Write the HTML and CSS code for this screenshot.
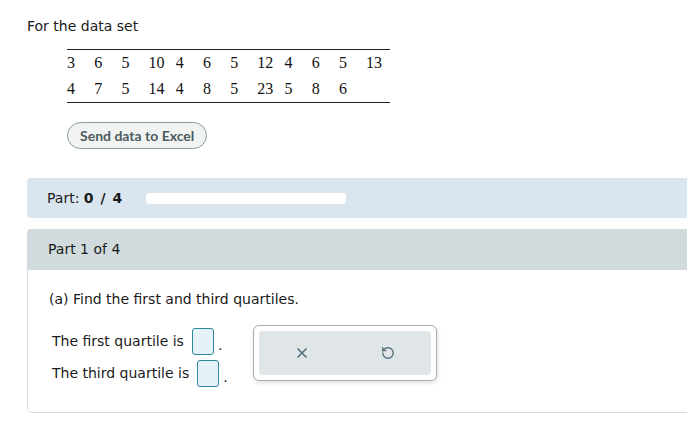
FILE: index.html
```html
<!DOCTYPE html>
<html lang="en">
<head>
    <meta charset="UTF-8">
    <meta name="viewport" content="width=device-width, initial-scale=1.0">
    <title>Quartiles</title>
    <link rel="stylesheet" href="styles.css">
</head>
<body>
    <div class="page">
        <p class="intro">For the data set</p>

        <div class="data-table">
            <span>3</span><span>6</span><span>5</span><span>10</span><span>4</span><span>6</span>
            <span>5</span><span>12</span><span>4</span><span>6</span><span>5</span><span>13</span>
            <span>4</span><span>7</span><span>5</span><span>14</span><span>4</span><span>8</span>
            <span>5</span><span>23</span><span>5</span><span>8</span><span>6</span><span></span>
        </div>

        <button class="excel-btn">Send data to Excel</button>

        <div class="part-bar">
            <span class="part-label">Part: <b>0 / 4</b></span>
            <div class="progress"></div>
        </div>

        <div class="part-card">
            <div class="part-head">Part 1 of 4</div>
            <div class="part-body">
                <p class="question">(a) Find the first and third quartiles.</p>
                <div class="answer-area">
                    <div class="answers">
                        <div class="answer-row">The first quartile is <span class="box"></span><span class="dot">.</span></div>
                        <div class="answer-row">The third quartile is <span class="box"></span><span class="dot">.</span></div>
                    </div>
                    <div class="tools">
                        <div class="tools-inner">
                            <svg class="icon" width="12" height="12" viewBox="0 0 12 12">
                                <path d="M1.5 1.5 L10.5 10.5 M10.5 1.5 L1.5 10.5" stroke="#55717c" stroke-width="1.6" fill="none"/>
                            </svg>
                            <svg class="icon" width="14" height="14" viewBox="0 0 24 24">
                                <path d="M3 12a9 9 0 1 0 9-9 9.75 9.75 0 0 0-6.74 2.74L3 8" stroke="#55717c" stroke-width="2.4" fill="none" stroke-linecap="round" stroke-linejoin="round"/>
                                <path d="M3 3v5h5" stroke="#55717c" stroke-width="2.4" fill="none" stroke-linecap="round" stroke-linejoin="round"/>
                            </svg>
                        </div>
                    </div>
                </div>
            </div>
        </div>
    </div>
</body>
</html>
```

FILE: styles.css
```css
body, html {
    margin: 0;
    padding: 0;
    background: #fff;
    overflow: hidden;
    font-family: "DejaVu Sans", Verdana, sans-serif;
    font-size: 14px;
    color: #1a1a1a;
}

.page {
    padding: 18px 0 0 27px;
    margin-right: -20px;
}

.intro {
    margin: 0;
    line-height: 17px;
}

.data-table {
    display: grid;
    grid-template-columns: repeat(11, 27.2px) 24px;
    width: 323px;
    margin: 14px 0 0 40px;
    border-top: 1px solid #222;
    border-bottom: 1px solid #222;
    font-family: "Liberation Serif", "Times New Roman", serif;
    font-size: 16px;
    line-height: 26px;
    color: #111;
}

.excel-btn {
    display: block;
    margin: 19px 0 0 40px;
    height: 27px;
    padding: 0 12px;
    border: 1px solid #8d9a9c;
    border-radius: 14px;
    background: #f1f3f3;
    font-family: Lato, "Open Sans", sans-serif;
    font-weight: bold;
    font-size: 14px;
    color: #4d5b5e;
}

.part-bar {
    display: flex;
    align-items: center;
    gap: 24px;
    height: 40px;
    margin-top: 29px;
    padding-left: 20px;
    background: #dae6ef;
    border-radius: 4px 0 0 4px;
}

.part-label b {
    word-spacing: 2px;
}

.progress {
    width: 200px;
    height: 11px;
    background: #fff;
    border-radius: 3px;
}

.part-card {
    margin-top: 11px;
}

.part-head {
    height: 41px;
    line-height: 41px;
    padding-left: 21px;
    background: #d1dadc;
    border-radius: 4px 0 0 0;
}

.part-body {
    height: 143px;
    box-sizing: border-box;
    padding: 21px 0 0 21px;
    border: 1px solid #d6dee1;
    border-top: none;
    border-radius: 0 0 0 5px;
}

.question {
    margin: 0;
    line-height: 17px;
}

.answer-area {
    display: flex;
    align-items: flex-start;
    margin-top: 17px;
}

.answers {
    width: 204px;
    padding: 2px 0 0 3px;
    box-sizing: border-box;
}

.answer-row {
    display: flex;
    align-items: center;
    height: 28px;
    margin-bottom: 4px;
}

.box {
    display: inline-block;
    width: 20px;
    height: 25px;
    margin-left: 8px;
    border: 1.5px solid #2a8996;
    border-radius: 3px;
    background: #e5f3f8;
}

.dot {
    align-self: flex-end;
    margin-left: 4px;
    line-height: 20px;
}

.tools {
    padding: 5px;
    border: 1px solid #9fb0b8;
    border-radius: 6px;
    background: #fff;
    box-shadow: 1px 2px 4px rgba(0, 0, 0, 0.12);
}

.tools-inner {
    display: flex;
    align-items: center;
    justify-content: space-around;
    width: 172px;
    height: 44px;
    background: #e0e6e8;
    border-radius: 4px;
}
```
